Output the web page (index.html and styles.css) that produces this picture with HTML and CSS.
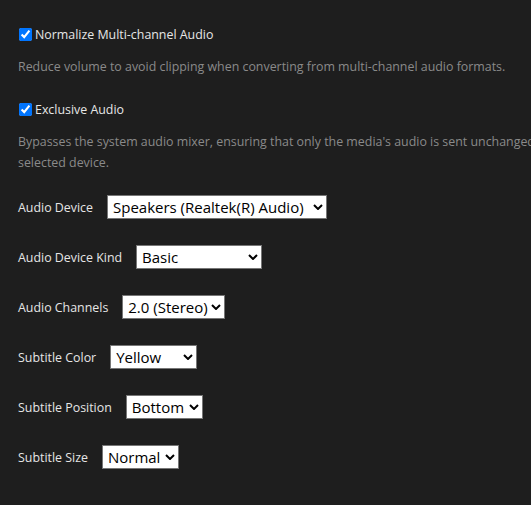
FILE: index.html
```html
<!DOCTYPE html>
<html>
<head>
<meta charset="utf-8">
<link rel="stylesheet" href="styles.css">
</head>
<body>
<div class="page">
  <div class="check-row">
    <input type="checkbox" id="norm" checked>
    <label for="norm">Normalize Multi-channel Audio</label>
  </div>
  <p class="desc">Reduce volume to avoid clipping when converting from multi-channel audio formats.</p>

  <div class="check-row">
    <input type="checkbox" id="excl" checked>
    <label for="excl">Exclusive Audio</label>
  </div>
  <p class="desc">Bypasses the system audio mixer, ensuring that only the media's audio is sent unchanged to the selected device.</p>

  <div class="field">
    <label>Audio Device</label>
    <span class="select w-device">
      <select><option>Speakers (Realtek(R) Audio)</option></select>
      <svg class="chev" viewBox="0 0 10 6"><path d="M1 1l4 4 4-4"/></svg>
    </span>
  </div>
  <div class="field">
    <label>Audio Device Kind</label>
    <span class="select w-kind">
      <select><option>Basic</option><option>WASAPI (Exclusive)</option></select>
      <svg class="chev" viewBox="0 0 10 6"><path d="M1 1l4 4 4-4"/></svg>
    </span>
  </div>
  <div class="field">
    <label>Audio Channels</label>
    <span class="select w-chan">
      <select><option>2.0 (Stereo)</option></select>
      <svg class="chev" viewBox="0 0 10 6"><path d="M1 1l4 4 4-4"/></svg>
    </span>
  </div>
  <div class="field">
    <label>Subtitle Color</label>
    <span class="select w-color">
      <select><option>Yellow</option><option>White</option></select>
      <svg class="chev" viewBox="0 0 10 6"><path d="M1 1l4 4 4-4"/></svg>
    </span>
  </div>
  <div class="field">
    <label>Subtitle Position</label>
    <span class="select w-pos">
      <select><option>Bottom</option><option>Top</option></select>
      <svg class="chev" viewBox="0 0 10 6"><path d="M1 1l4 4 4-4"/></svg>
    </span>
  </div>
  <div class="field">
    <label>Subtitle Size</label>
    <span class="select w-size">
      <select><option>Normal</option><option>Large</option></select>
      <svg class="chev" viewBox="0 0 10 6"><path d="M1 1l4 4 4-4"/></svg>
    </span>
  </div>
</div>
</body>
</html>
```

FILE: styles.css
```css
html, body {
  margin: 0;
  padding: 0;
  background: #1e1e1e;
  overflow: hidden;
}
body {
  font-family: "Open Sans", "Noto Sans", sans-serif;
  font-size: 12.4px;
  color: #e6e6e6;
}
.page {
  width: 600px;
  padding: 24px 0 0 18px;
}
.check-row {
  display: flex;
  align-items: center;
  height: 20px;
  margin-bottom: 12px;
}
.check-row input {
  width: 13px;
  height: 13px;
  margin: 0 3px 0 1px;
  accent-color: #0075ff;
}
.desc {
  margin: 0 0 22px 0;
  line-height: 21px;
  color: #8a8a8a;
}
.field {
  display: flex;
  align-items: center;
  gap: 14px;
  height: 24px;
  margin-bottom: 26px;
}
.select {
  position: relative;
  display: inline-flex;
}
.select select {
  appearance: none;
  -webkit-appearance: none;
  width: 100%;
  height: 24px;
  margin: 0;
  padding: 0 16px 0 5px;
  border: 1px solid #767676;
  border-radius: 0;
  background: #ffffff;
  color: #000;
  font-family: "Open Sans", "Noto Sans", sans-serif;
  font-size: 15px;
}
.chev {
  position: absolute;
  right: 4px;
  top: 9px;
  width: 10px;
  height: 6px;
  pointer-events: none;
  fill: none;
  stroke: #000;
  stroke-width: 2;
}
.w-device { width: 220px; }
.w-kind { width: 126px; }
.w-chan { width: 103px; }
.w-color { width: 87px; }
.w-pos { width: 77px; }
.w-size { width: 77px; }
```
